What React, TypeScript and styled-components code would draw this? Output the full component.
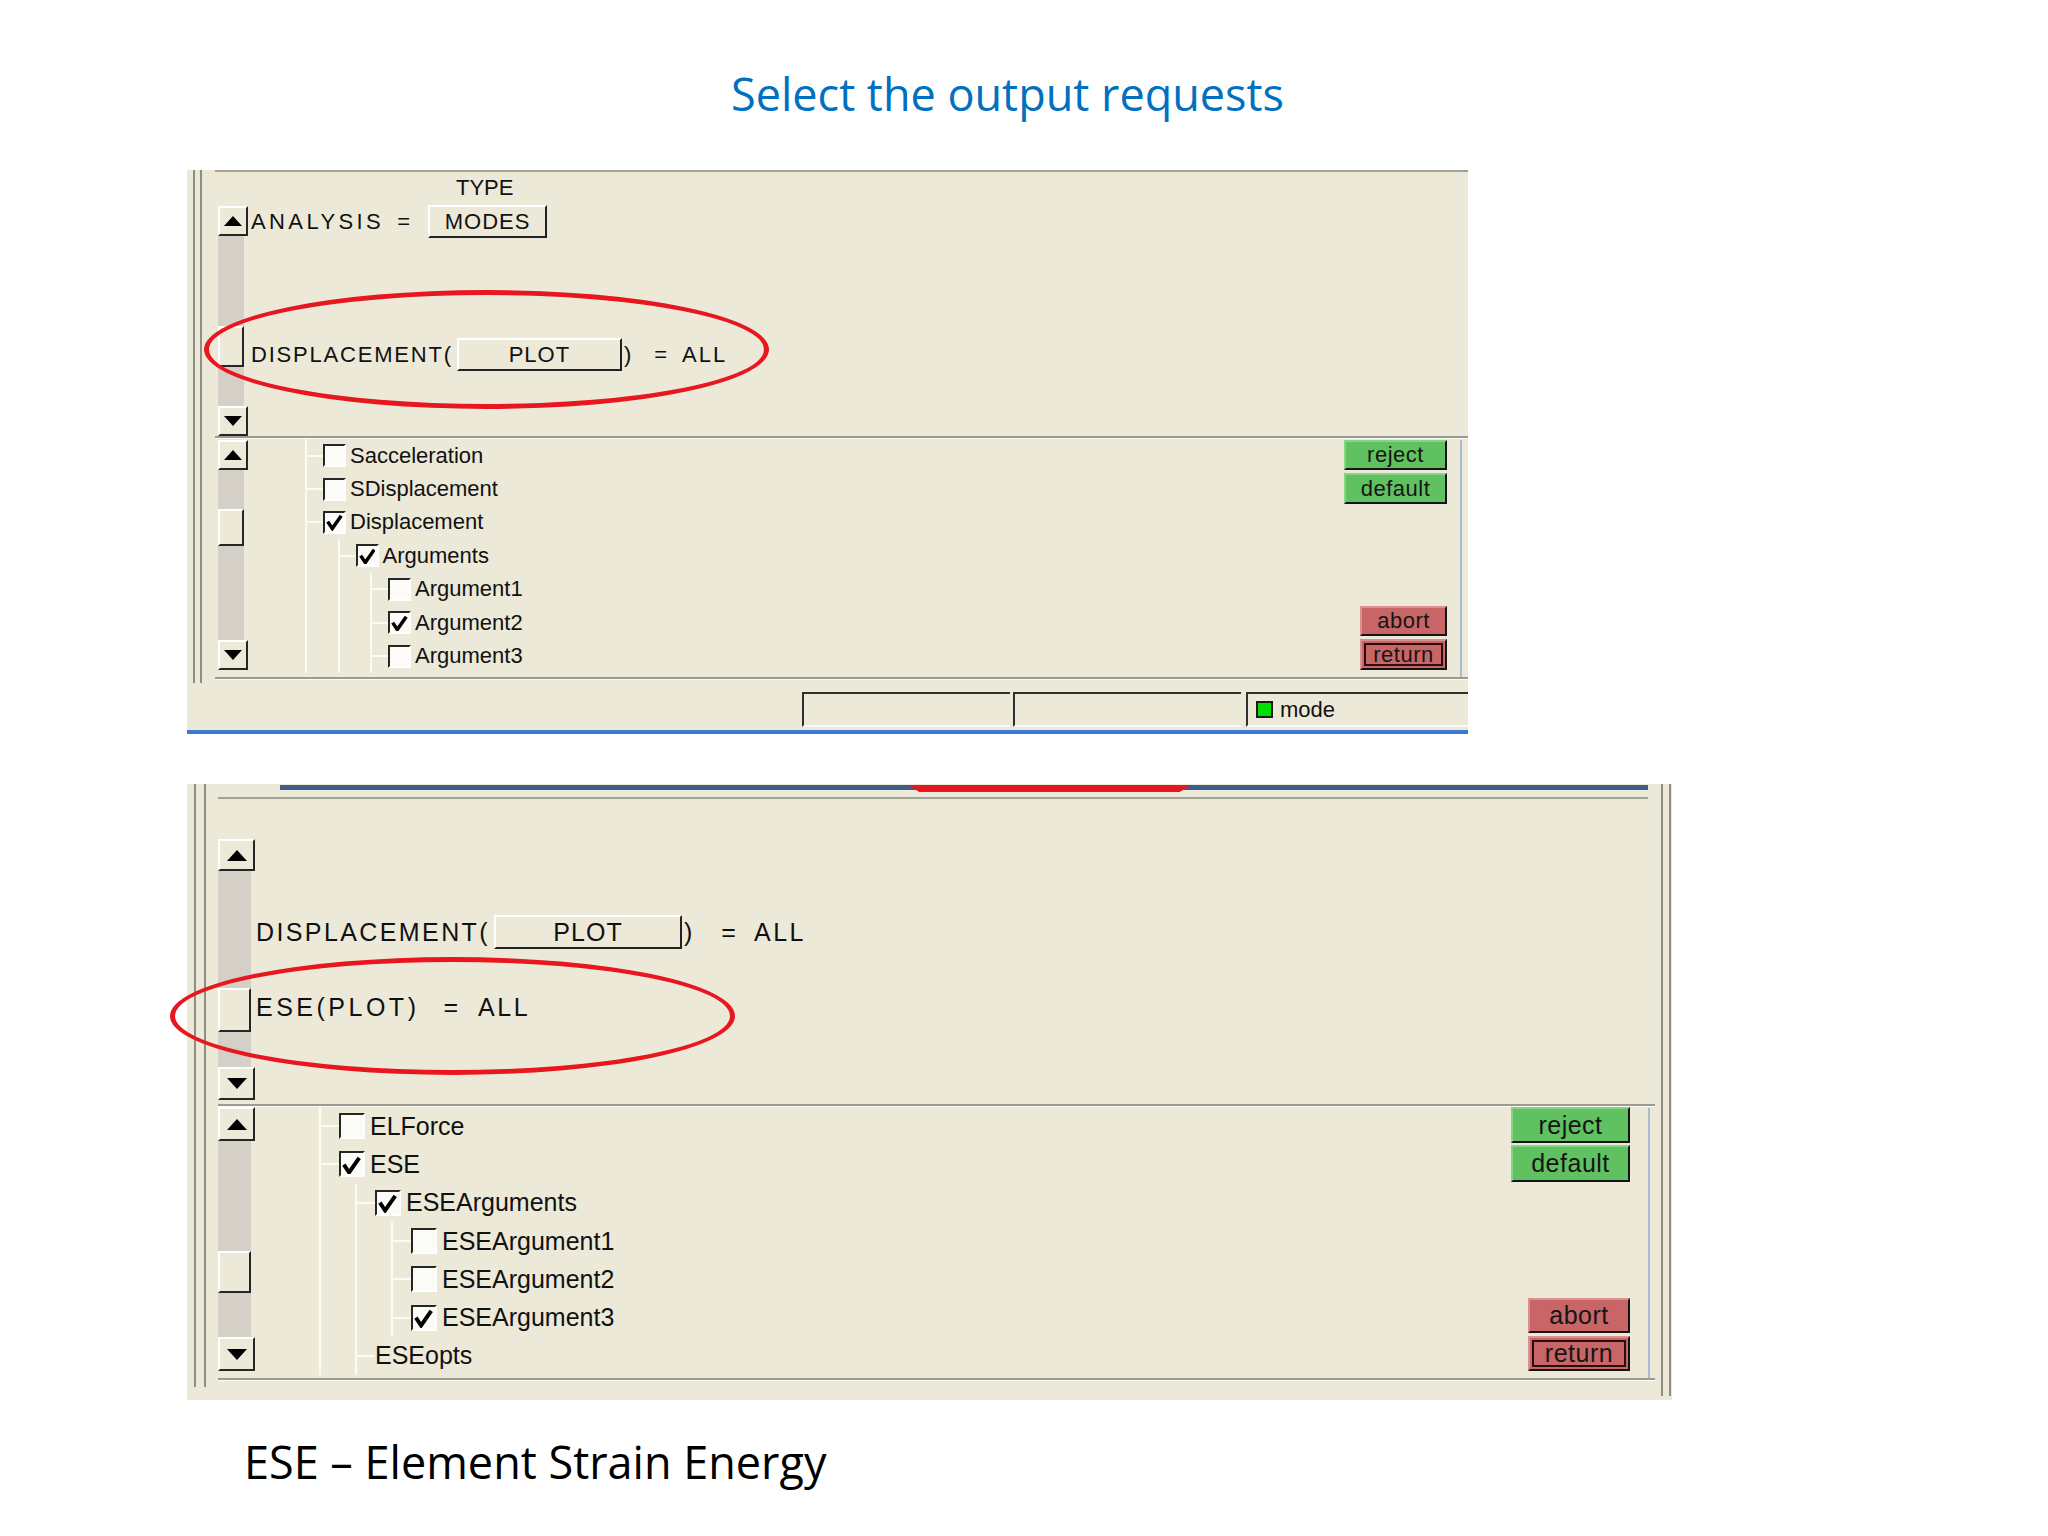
import React from "react";
import styled, { createGlobalStyle } from "styled-components";

const BEIGE = "#ece9d8";
const TRACK = "#d4d0c8";
const INK = "#111111";
const GUIDE = "#fbfbf6";

const GlobalStyle = createGlobalStyle`
  html, body {
    margin: 0;
    padding: 0;
    background: #ffffff;
  }
  body {
    font-family: "Liberation Sans", Arial, sans-serif;
  }
`;

type Metrics = {
  font: number;
  rowH: number;
  cb: number;
  indent: number;
  stub: number;
  textGap: number;
  arrow: number;
};

const M1: Metrics = { font: 22, rowH: 33.4, cb: 23, indent: 32.5, stub: 18, textGap: 4, arrow: 18 };
const M2: Metrics = { font: 25, rowH: 38.3, cb: 26, indent: 36, stub: 20, textGap: 5, arrow: 20 };

type TreeNode = { label: string; level: number; checked?: boolean; noBox?: boolean };

const tree1: TreeNode[] = [
  { label: "Sacceleration", level: 0 },
  { label: "SDisplacement", level: 0 },
  { label: "Displacement", level: 0, checked: true },
  { label: "Arguments", level: 1, checked: true },
  { label: "Argument1", level: 2 },
  { label: "Argument2", level: 2, checked: true },
  { label: "Argument3", level: 2 },
];

const tree2: TreeNode[] = [
  { label: "ELForce", level: 0 },
  { label: "ESE", level: 0, checked: true },
  { label: "ESEArguments", level: 1, checked: true },
  { label: "ESEArgument1", level: 2 },
  { label: "ESEArgument2", level: 2 },
  { label: "ESEArgument3", level: 2, checked: true },
  { label: "ESEopts", level: 1, noBox: true },
];

// ---------- page ----------

const Page = styled.div`
  width: 2048px;
  height: 1536px;
  display: flex;
  flex-direction: column;
  overflow: hidden;
`;

const Title = styled.h1`
  margin: 64px 0 0 731px;
  font-family: "Open Sans", sans-serif;
  font-weight: 400;
  font-size: 45px;
  line-height: 60px;
  color: #0070c0;
  white-space: nowrap;
`;

const Caption = styled.p`
  margin: 32px 0 0 244px;
  font-family: "Open Sans", sans-serif;
  font-size: 45px;
  line-height: 60px;
  color: #000;
  white-space: nowrap;
`;

const Window = styled.div<{ $top: number; $w: number; $h: number }>`
  position: relative;
  flex-shrink: 0;
  margin: ${({ $top }) => $top}px 0 0 187px;
  width: ${({ $w }) => $w}px;
  height: ${({ $h }) => $h}px;
  background: ${BEIGE};
  display: flex;
  flex-direction: column;
  color: ${INK};
`;

const Frame = styled.div<{ $h: number }>`
  display: flex;
  height: ${({ $h }) => $h}px;
  flex-shrink: 0;
`;

const Rails = styled.div<{ $w: number; $ml: number; $gap: number; $h: number }>`
  flex-shrink: 0;
  width: ${({ $w }) => $w}px;
  height: ${({ $h }) => $h}px;
  box-sizing: border-box;
  padding-left: ${({ $ml }) => $ml}px;

  &::before {
    content: "";
    display: block;
    width: ${({ $gap }) => $gap}px;
    height: 100%;
    border-left: 2px solid #8f8e84;
    border-right: 2px solid #8f8e84;
  }
`;

const Body = styled.div`
  flex: 1;
  display: flex;
  flex-direction: column;
  min-width: 0;
`;

const HLine = styled.div<{ $w?: number }>`
  height: 2px;
  width: ${({ $w }) => ($w ? `${$w}px` : "100%")};
  background: #a3a296;
  flex-shrink: 0;
`;

const Sep = styled.div`
  height: 0;
  border-top: 2px solid #9d9b8f;
  border-bottom: 1px solid #fbfbf6;
  flex-shrink: 0;
`;

const Section = styled.div<{ $h: number }>`
  display: flex;
  height: ${({ $h }) => $h}px;
  flex-shrink: 0;
`;

// ---------- scrollbar ----------

const ScrollCol = styled.div<{ $w: number; $ml: number; $pt: number }>`
  flex-shrink: 0;
  width: ${({ $w }) => $w}px;
  margin-left: ${({ $ml }) => $ml}px;
  padding-top: ${({ $pt }) => $pt}px;
  display: flex;
  flex-direction: column;
`;

const ArrowBtn = styled.div<{ $h: number }>`
  box-sizing: border-box;
  height: ${({ $h }) => $h}px;
  background: ${BEIGE};
  border-top: 2px solid #ffffff;
  border-left: 2px solid #ffffff;
  border-right: 2px solid #262626;
  border-bottom: 2px solid #262626;
  display: flex;
  align-items: center;
  justify-content: center;
`;

const Track = styled.div<{ $h: number }>`
  height: ${({ $h }) => $h}px;
  width: calc(100% - 4px);
  background: ${TRACK};
  display: flex;
  flex-direction: column;
`;

const Thumb = styled.div<{ $top: number; $h: number }>`
  box-sizing: border-box;
  margin-top: ${({ $top }) => $top}px;
  height: ${({ $h }) => $h}px;
  background: ${BEIGE};
  border-top: 2px solid #ffffff;
  border-left: 2px solid #ffffff;
  border-right: 2px solid #262626;
  border-bottom: 2px solid #262626;
`;

const Tri = ({ dir, size }: { dir: "up" | "down"; size: number }) => (
  <svg width={size} height={size * 0.55} viewBox="0 0 20 11">
    <polygon points={dir === "up" ? "10,0 20,11 0,11" : "0,0 20,0 10,11"} fill="#000" />
  </svg>
);

interface ScrollProps {
  w: number;
  ml: number;
  pt: number;
  upH: number;
  trackH: number;
  downH: number;
  thumbTop: number;
  thumbH: number;
  arrow: number;
}

const Scrollbar = (p: ScrollProps) => (
  <ScrollCol $w={p.w} $ml={p.ml} $pt={p.pt}>
    <ArrowBtn $h={p.upH}>
      <Tri dir="up" size={p.arrow} />
    </ArrowBtn>
    <Track $h={p.trackH}>
      <Thumb $top={p.thumbTop} $h={p.thumbH} />
    </Track>
    <ArrowBtn $h={p.downH}>
      <Tri dir="down" size={p.arrow} />
    </ArrowBtn>
  </ScrollCol>
);

// ---------- form fields ----------

const Fields = styled.div<{ $pl: number }>`
  flex: 1;
  display: flex;
  flex-direction: column;
  padding-left: ${({ $pl }) => $pl}px;
`;

const TypeLabel = styled.div<{ $font: number }>`
  margin-top: 4px;
  padding-left: 205px;
  font-size: ${({ $font }) => $font}px;
  line-height: 24px;
`;

const FieldRow = styled.div<{ $mt: number; $h: number; $font: number }>`
  display: flex;
  align-items: center;
  margin-top: ${({ $mt }) => $mt}px;
  height: ${({ $h }) => $h}px;
  font-size: ${({ $font }) => $font}px;
  white-space: nowrap;
`;

const Caps = styled.span<{ $ls: number }>`
  letter-spacing: ${({ $ls }) => $ls}px;
`;

const Tok = styled.span<{ $ml: number; $ls?: number }>`
  margin-left: ${({ $ml }) => $ml}px;
  letter-spacing: ${({ $ls }) => $ls ?? 1}px;
`;

const XButton = styled.div<{ $w: number; $h: number; $ml: number }>`
  box-sizing: border-box;
  width: ${({ $w }) => $w}px;
  height: ${({ $h }) => $h}px;
  margin-left: ${({ $ml }) => $ml}px;
  background: ${BEIGE};
  border-top: 2px solid #ffffff;
  border-left: 2px solid #ffffff;
  border-right: 2px solid #222222;
  border-bottom: 2px solid #222222;
  display: flex;
  align-items: center;
  justify-content: center;
  letter-spacing: 1px;
`;

// ---------- tree ----------

const TreeArea = styled.div<{ $pl: number }>`
  flex: 1;
  padding-left: ${({ $pl }) => $pl}px;
  display: flex;
  flex-direction: column;
`;

const TreeRow = styled.div<{ $h: number; $font: number }>`
  display: flex;
  align-items: center;
  height: ${({ $h }) => $h}px;
  font-size: ${({ $font }) => $font}px;
  flex-shrink: 0;
`;

const Guide = styled.span<{ $w: number }>`
  align-self: stretch;
  flex-shrink: 0;
  width: ${({ $w }) => $w}px;
  background: linear-gradient(${GUIDE}, ${GUIDE}) left top / 2px 100% no-repeat;
`;

const Stub = styled.span<{ $w: number }>`
  align-self: stretch;
  flex-shrink: 0;
  width: ${({ $w }) => $w}px;
  background:
    linear-gradient(${GUIDE}, ${GUIDE}) left top / 2px 100% no-repeat,
    linear-gradient(${GUIDE}, ${GUIDE}) left center / 100% 2px no-repeat;
`;

const Box = styled.span<{ $size: number }>`
  box-sizing: border-box;
  flex-shrink: 0;
  width: ${({ $size }) => $size}px;
  height: ${({ $size }) => $size}px;
  background: #fbfbf8;
  border-top: 2px solid #262626;
  border-left: 2px solid #262626;
  border-right: 2px solid #ffffff;
  border-bottom: 2px solid #ffffff;
  display: flex;
  align-items: flex-end;
  justify-content: flex-start;
  padding: 0 0 1px 1px;
`;

const NodeLabel = styled.span<{ $ml: number }>`
  margin-left: ${({ $ml }) => $ml}px;
  white-space: nowrap;
  line-height: 1;
`;

const CheckMark = ({ size }: { size: number }) => (
  <svg width={size * 0.72} height={size * 0.72} viewBox="0 0 10 10">
    <path d="M1 4.6 L3.8 8.8 L9.2 1" fill="none" stroke="#000" strokeWidth={2.1} />
  </svg>
);

const Tree = ({ nodes, m, pl }: { nodes: TreeNode[]; m: Metrics; pl: number }) => (
  <TreeArea $pl={pl}>
    {nodes.map((n) => (
      <TreeRow key={n.label} $h={m.rowH} $font={m.font}>
        {Array.from({ length: n.level }).map((_, i) => (
          <Guide key={i} $w={m.indent} />
        ))}
        <Stub $w={m.stub} />
        {!n.noBox && <Box $size={m.cb}>{n.checked && <CheckMark size={m.cb} />}</Box>}
        <NodeLabel $ml={n.noBox ? 0 : m.textGap}>{n.label}</NodeLabel>
      </TreeRow>
    ))}
  </TreeArea>
);

// ---------- action buttons ----------

const Actions = styled.div<{ $pt: number; $pb: number }>`
  flex-shrink: 0;
  display: flex;
  flex-direction: column;
  justify-content: space-between;
  align-items: flex-end;
  padding-top: ${({ $pt }) => $pt}px;
  padding-bottom: ${({ $pb }) => $pb}px;
`;

const BtnGroup = styled.div<{ $gap: number }>`
  display: flex;
  flex-direction: column;
  align-items: flex-end;
  gap: ${({ $gap }) => $gap}px;
`;

const tones = {
  green: { bg: "#5fc160", hi: "#86d486" },
  red: { bg: "#c86566", hi: "#dc8f8f" },
};

const ActionBtn = styled.div<{
  $tone: "green" | "red";
  $w: number;
  $h: number;
  $font: number;
  $focus?: boolean;
}>`
  box-sizing: border-box;
  width: ${({ $w }) => $w}px;
  height: ${({ $h }) => $h}px;
  background: ${({ $tone }) => tones[$tone].bg};
  border-top: 2px solid ${({ $tone }) => tones[$tone].hi};
  border-left: 2px solid ${({ $tone }) => tones[$tone].hi};
  border-right: 2px solid #141414;
  border-bottom: 2px solid #141414;
  box-shadow: ${({ $focus, $tone }) =>
    $focus ? `inset 0 0 0 2px ${tones[$tone].bg}, inset 0 0 0 4px #2a0c0c` : "none"};
  display: flex;
  align-items: center;
  justify-content: center;
  font-size: ${({ $font }) => $font}px;
  letter-spacing: 0.5px;
  color: #151515;
`;

const SideLine = styled.div<{ $ml: number; $mr: number }>`
  flex-shrink: 0;
  width: 2px;
  margin: 1px ${({ $mr }) => $mr}px 0 ${({ $ml }) => $ml}px;
  background: #a9bbd4;
`;

// ---------- status bar ----------

const StatusBar = styled.div`
  display: flex;
  margin-top: 9px;
  height: 35px;
  padding-left: 615px;
  flex-shrink: 0;
`;

const StatusField = styled.div<{ $w: number; $ml: number }>`
  box-sizing: border-box;
  width: ${({ $w }) => $w}px;
  margin-left: ${({ $ml }) => $ml}px;
  border-top: 2px solid #2f2f2f;
  border-left: 2px solid #2f2f2f;
  border-bottom: 2px solid #fbfbf6;
  display: flex;
  align-items: center;
  padding-left: 8px;
  font-size: 22px;
`;

const Lamp = styled.span`
  box-sizing: border-box;
  width: 17px;
  height: 17px;
  margin-right: 7px;
  background: #00e000;
  border: 2px solid #1b1b1b;
`;

const BlueRule = styled.div`
  margin-top: 3px;
  height: 4px;
  background: #3b78d4;
  flex-shrink: 0;
`;

// ---------- window 2 top strip ----------

const TopStrip = styled.div`
  height: 13px;
  flex-shrink: 0;
`;

const DarkStrip = styled.div`
  display: flex;
  margin: 1px 0 0 62px;
  width: 1368px;
  height: 5px;
  background: #3d5d8c;
`;

const RedNotch = styled.div`
  margin-left: 628px;
  width: 283px;
  height: 7px;
  background: #e8161e;
  clip-path: polygon(0 0, 100% 0, 96% 100%, 4% 100%);
`;

// ---------- red ellipse overlay ----------

const Ellipse = styled.div<{ $x: number; $y: number; $w: number; $h: number }>`
  position: absolute;
  left: ${({ $x }) => $x}px;
  top: ${({ $y }) => $y}px;
  width: ${({ $w }) => $w}px;
  height: ${({ $h }) => $h}px;
  box-sizing: border-box;
  border: 5px solid #e8161e;
  border-radius: 50%;
  pointer-events: none;
`;

export default function App() {
  return (
    <Page>
      <GlobalStyle />
      <Title>Select the output requests</Title>

      <Window $top={46} $w={1281} $h={564}>
        <Frame $h={513}>
          <Rails $w={28} $ml={6} $gap={5} $h={513} />
          <Body>
            <HLine />
            <Section $h={264}>
              <Scrollbar w={30} ml={3} pt={34} upH={30} trackH={170} downH={30} thumbTop={90} thumbH={41} arrow={M1.arrow} />
              <Fields $pl={3}>
                <TypeLabel $font={M1.font}>TYPE</TypeLabel>
                <FieldRow $mt={5} $h={33} $font={M1.font}>
                  <Caps $ls={3.4}>ANALYSIS</Caps>
                  <Tok $ml={13}>=</Tok>
                  <XButton $w={119} $h={33} $ml={17}>MODES</XButton>
                </FieldRow>
                <FieldRow $mt={100} $h={33} $font={M1.font}>
                  <Caps $ls={1.8}>DISPLACEMENT(</Caps>
                  <XButton $w={165} $h={33} $ml={4}>PLOT</XButton>
                  <Tok $ml={2}>)</Tok>
                  <Tok $ml={22}>=</Tok>
                  <Tok $ml={14} $ls={2}>ALL</Tok>
                </FieldRow>
              </Fields>
            </Section>
            <Sep />
            <Section $h={238}>
              <Scrollbar w={30} ml={3} pt={1} upH={30} trackH={170} downH={30} thumbTop={39} thumbH={37} arrow={M1.arrow} />
              <Tree nodes={tree1} m={M1} pl={57} />
              <Actions $pt={1} $pb={7}>
                <BtnGroup $gap={3}>
                  <ActionBtn $tone="green" $w={103} $h={30} $font={M1.font}>reject</ActionBtn>
                  <ActionBtn $tone="green" $w={103} $h={31} $font={M1.font}>default</ActionBtn>
                </BtnGroup>
                <BtnGroup $gap={3}>
                  <ActionBtn $tone="red" $w={87} $h={30} $font={M1.font}>abort</ActionBtn>
                  <ActionBtn $tone="red" $w={87} $h={31} $font={M1.font} $focus>return</ActionBtn>
                </BtnGroup>
              </Actions>
              <SideLine $ml={13} $mr={6} />
            </Section>
            <Sep />
          </Body>
        </Frame>
        <StatusBar>
          <StatusField $w={208} $ml={0} />
          <StatusField $w={228} $ml={3} />
          <StatusField $w={222} $ml={5}>
            <Lamp />
            mode
          </StatusField>
        </StatusBar>
        <BlueRule />
        <Ellipse $x={17} $y={120} $w={565} $h={119} />
      </Window>

      <Window $top={50} $w={1485} $h={616}>
        <Frame $h={612}>
          <Rails $w={31} $ml={7} $gap={8} $h={603} />
          <Body>
            <TopStrip>
              <DarkStrip>
                <RedNotch />
              </DarkStrip>
            </TopStrip>
            <HLine $w={1430} />
            <Section $h={305}>
              <Scrollbar w={37} ml={0} pt={40} upH={32} trackH={196} downH={33} thumbTop={117} thumbH={44} arrow={M2.arrow} />
              <Fields $pl={1}>
                <FieldRow $mt={116} $h={34} $font={M2.font}>
                  <Caps $ls={2.4}>DISPLACEMENT(</Caps>
                  <XButton $w={188} $h={34} $ml={4}>PLOT</XButton>
                  <Tok $ml={2}>)</Tok>
                  <Tok $ml={28}>=</Tok>
                  <Tok $ml={17} $ls={2.5}>ALL</Tok>
                </FieldRow>
                <FieldRow $mt={41} $h={34} $font={M2.font}>
                  <Caps $ls={3.5}>ESE(PLOT)</Caps>
                  <Tok $ml={24}>=</Tok>
                  <Tok $ml={19} $ls={2.5}>ALL</Tok>
                </FieldRow>
              </Fields>
            </Section>
            <Sep />
            <Section $h={271}>
              <Scrollbar w={37} ml={0} pt={0} upH={34} trackH={196} downH={34} thumbTop={110} thumbH={42} arrow={M2.arrow} />
              <Tree nodes={tree2} m={M2} pl={64} />
              <Actions $pt={0} $pb={7}>
                <BtnGroup $gap={2}>
                  <ActionBtn $tone="green" $w={119} $h={36} $font={M2.font}>reject</ActionBtn>
                  <ActionBtn $tone="green" $w={119} $h={37} $font={M2.font}>default</ActionBtn>
                </BtnGroup>
                <BtnGroup $gap={3}>
                  <ActionBtn $tone="red" $w={102} $h={35} $font={M2.font}>abort</ActionBtn>
                  <ActionBtn $tone="red" $w={102} $h={35} $font={M2.font} $focus>return</ActionBtn>
                </BtnGroup>
              </Actions>
              <SideLine $ml={18} $mr={5} />
            </Section>
            <Sep />
          </Body>
          <Rails $w={17} $ml={6} $gap={6} $h={612} />
        </Frame>
        <Ellipse $x={-17} $y={173} $w={565} $h={118} />
      </Window>

      <Caption>ESE – Element Strain Energy</Caption>
    </Page>
  );
}
